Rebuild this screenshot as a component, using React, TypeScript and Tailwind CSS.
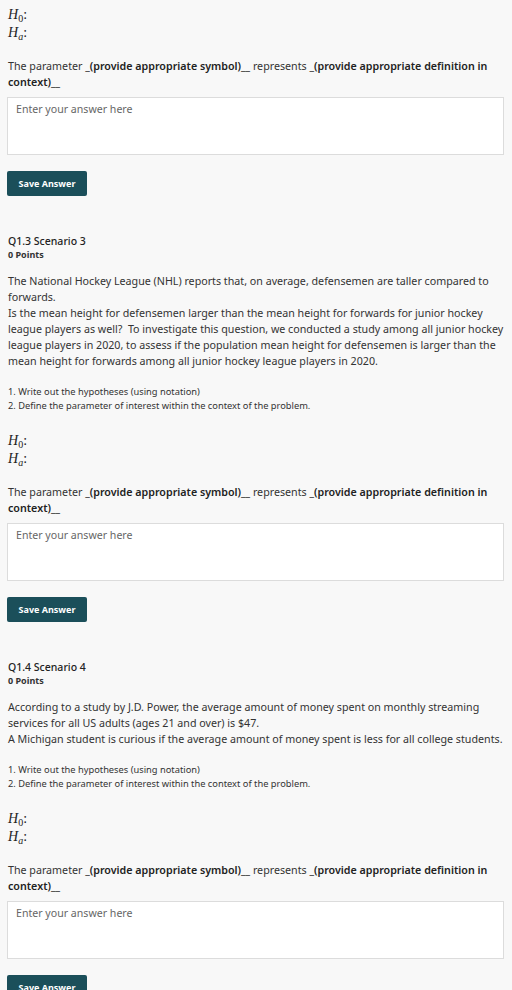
import React from "react";

type Scenario = {
    title: string;
    paragraphs: string[];
};

const scenarios: Scenario[] = [
    {
        title: "Q1.3 Scenario 3",
        paragraphs: [
            "The National Hockey League (NHL) reports that, on average, defensemen are taller compared to forwards.",
            "Is the mean height for defensemen larger than the mean height for forwards for junior hockey league players as well?  To investigate this question, we conducted a study among all junior hockey league players in 2020, to assess if the population mean height for defensemen is larger than the mean height for forwards among all junior hockey league players in 2020.",
        ],
    },
    {
        title: "Q1.4 Scenario 4",
        paragraphs: [
            "According to a study by J.D. Power, the average amount of money spent on monthly streaming services for all US adults (ages 21 and over) is $47.",
            "A Michigan student is curious if the average amount of money spent is less for all college students.",
        ],
    },
];

function Hypotheses() {
    return (
        <div className="font-['Liberation_Serif',serif] text-[14px] leading-[18px] text-[#222]">
            <div className="flex items-baseline">
                <i>H</i>
                <span className="relative top-[3px] text-[10px] leading-none">0</span>
                <span>:</span>
            </div>
            <div className="flex items-baseline">
                <i>H</i>
                <i className="relative top-[3px] text-[10px] leading-none">a</i>
                <span>:</span>
            </div>
        </div>
    );
}

function AnswerBlock() {
    return (
        <div className="flex flex-col">
            <Hypotheses />
            <p className="mt-4 text-[10.7px] leading-4 text-[#333]">
                <span>The parameter </span>
                <b className="font-semibold text-[#222]">_(provide appropriate symbol)__</b>
                <span> represents </span>
                <b className="font-semibold text-[#222]">_(provide appropriate definition in</b>{" "}
                <b className="font-semibold text-[#222]">context)__</b>
            </p>
            <textarea
                placeholder="Enter your answer here"
                className="-ml-px mt-[7px] h-[58px] w-[calc(100%+1px)] resize-none border border-[#dcdcdc] bg-white px-[8px] py-[3px] text-[10.6px] leading-4 text-[#333] placeholder:text-[#666] outline-none"
            />
            <div className="mt-4 flex">
                <button className="-ml-px h-[25px] w-[80px] rounded-[2px] bg-[#1b4f5a] text-[9px] font-bold leading-none text-white">
                    Save Answer
                </button>
            </div>
        </div>
    );
}

function ScenarioBlock({ s }: { s: Scenario }) {
    return (
        <div className="mt-[37px] flex flex-col">
            <h3 className="text-[10.5px] font-medium leading-4 text-[#222]">{s.title}</h3>
            <div className="text-[9px] font-bold leading-3 text-[#333]">0 Points</div>
            <div className="mt-3 whitespace-pre-wrap text-[10.7px] leading-4 text-[#333]">
                {s.paragraphs.map((p) => (
                    <p key={p}>{p}</p>
                ))}
            </div>
            <ol className="mt-4 text-[9.3px] leading-[14px] text-[#333]">
                <li>1. Write out the hypotheses (using notation)</li>
                <li>2. Define the parameter of interest within the context of the problem.</li>
            </ol>
            <div className="mt-[19px]">
                <AnswerBlock />
            </div>
        </div>
    );
}

export default function App() {
    return (
        <div className="min-h-[990px] bg-[#f8f8f8] px-2 pt-[6px] font-['Noto_Sans',sans-serif]">
            <AnswerBlock />
            {scenarios.map((s) => (
                <ScenarioBlock key={s.title} s={s} />
            ))}
        </div>
    );
}
